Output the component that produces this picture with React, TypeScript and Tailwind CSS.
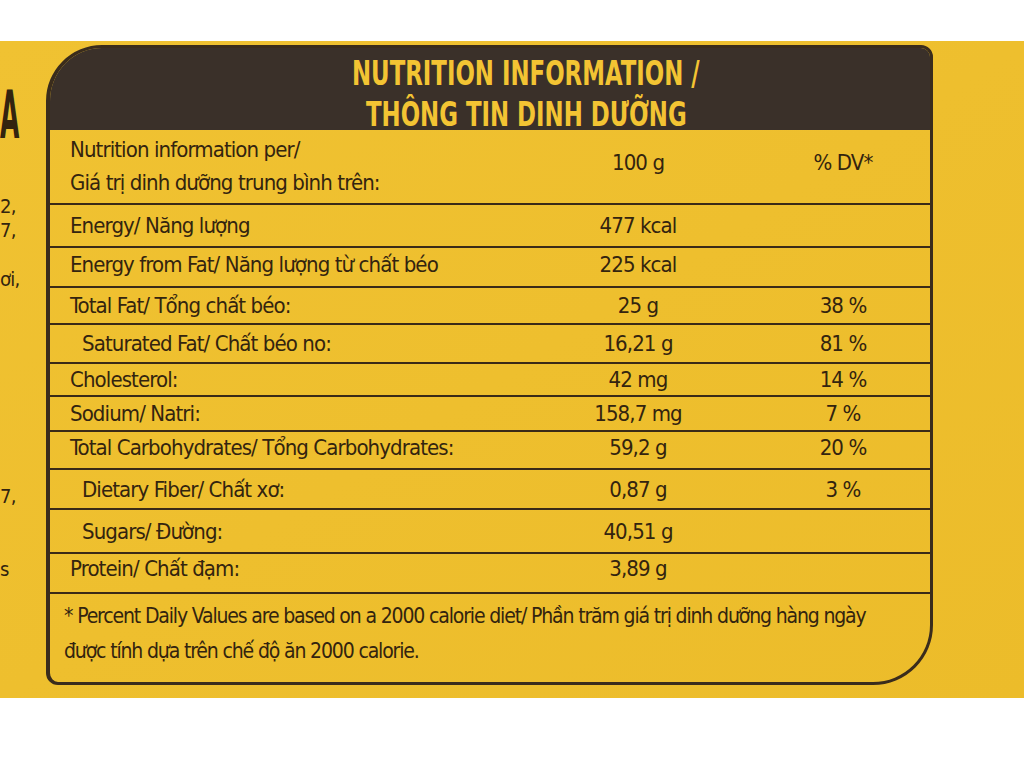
import React from "react";

type Row = {
  label: string;
  value: string;
  dv: string;
  h: string;
  indent?: boolean;
  shift?: string;
};

const ROWS: Row[] = [
  { label: "Energy/ Năng lượng", value: "477 kcal", dv: "", h: "h-[43px]" },
  { label: "Energy from Fat/ Năng lượng từ chất béo", value: "225 kcal", dv: "", h: "h-[40px]", shift: "pb-[6px]" },
  { label: "Total Fat/ Tổng chất béo:", value: "25 g", dv: "38 %", h: "h-[37px]" },
  { label: "Saturated Fat/ Chất béo no:", value: "16,21 g", dv: "81 %", h: "h-[39px]", indent: true },
  { label: "Cholesterol:", value: "42 mg", dv: "14 %", h: "h-[33px]" },
  { label: "Sodium/ Natri:", value: "158,7 mg", dv: "7 %", h: "h-[35px]" },
  { label: "Total Carbohydrates/ Tổng Carbohydrates:", value: "59,2 g", dv: "20 %", h: "h-[38px]", shift: "pb-[6px]" },
  { label: "Dietary Fiber/ Chất xơ:", value: "0,87 g", dv: "3 %", h: "h-[40px]", indent: true },
  { label: "Sugars/ Đường:", value: "40,51 g", dv: "", h: "h-[44px]", indent: true },
  { label: "Protein/ Chất đạm:", value: "3,89 g", dv: "", h: "h-[40px]", shift: "pb-[9px]" },
];

const LEFT_LINES = ["2,", "7,", "", "ơi,", "", "", "", "", "", "", "", "", "7,", "", "", "s"];

export default function App() {
  return (
    <div className="w-[1024px] h-[768px] bg-white flex flex-col font-['DejaVu_Sans_Condensed','Liberation_Sans',sans-serif] text-[#33240f]">
      <div className="h-[41px] shrink-0" />
      <div className="h-[657px] shrink-0 bg-gradient-to-br from-[#f0c232] via-[#eebf2e] to-[#ecbc2a] flex pt-[4px]">
        {/* left cut-off column */}
        <div className="w-[46px] shrink-0 overflow-hidden flex flex-col">
          <div className="h-[48px] leading-[48px] text-[66px] font-bold origin-left scale-x-[0.42] mt-[47px] text-[#33240f]">
            A
          </div>
          <div className="mt-[54px] flex flex-col text-[20px] leading-[24.2px] tracking-[-0.8px]">
            {LEFT_LINES.map((t, i) => (
              <div key={i} className="h-[24.2px] whitespace-nowrap">
                {t}
              </div>
            ))}
          </div>
        </div>

        {/* label box */}
        <div className="w-[887px] h-[640px] shrink-0 border-[3px] border-l-[4px] border-[#3a2c1c] rounded-tl-[56px] rounded-tr-[12px] rounded-br-[60px] rounded-bl-[12px] overflow-hidden flex flex-col">
          <div className="h-[82px] shrink-0 bg-[#3a3029] flex flex-col items-center pl-[72px] pt-[5px] text-[#f3c433] font-bold text-[33px] leading-[41px]">
            <div className="scale-x-[0.77] whitespace-nowrap">NUTRITION INFORMATION /</div>
            <div className="scale-x-[0.77] whitespace-nowrap">THÔNG TIN DINH DƯỠNG</div>
          </div>

          {/* column header row */}
          <div className="h-[73px] shrink-0 flex text-[22px] leading-[33px] tracking-[-0.9px]">
            <div className="flex-1 pl-[20px] pt-[3px] whitespace-nowrap">
              <div>Nutrition information per/</div>
              <div>Giá trị dinh dưỡng trung bình trên:</div>
            </div>
            <div className="w-[160px] text-center pt-[16px] whitespace-nowrap">100 g</div>
            <div className="w-[75px]" />
            <div className="w-[100px] text-center pt-[16px] whitespace-nowrap">% DV*</div>
            <div className="w-[37px]" />
          </div>

          {ROWS.map((r, i) => (
            <div
              key={i}
              className={`${r.h} ${r.shift ?? ""} shrink-0 flex items-center border-t-2 border-[#3a2a17] text-[22px] leading-[33px] tracking-[-0.9px]`}
            >
              <div className={`flex-1 whitespace-nowrap ${r.indent ? "pl-[32px]" : "pl-[20px]"}`}>{r.label}</div>
              <div className="w-[160px] text-center whitespace-nowrap">{r.value}</div>
              <div className="w-[75px]" />
              <div className="w-[100px] text-center whitespace-nowrap">{r.dv}</div>
              <div className="w-[37px]" />
            </div>
          ))}

          {/* footer */}
          <div className="flex-1 border-t-2 border-[#3a2a17] pl-[14px] pt-[5px] text-[21px] leading-[35px] whitespace-nowrap tracking-[-1.15px]">
            <div>* Percent Daily Values are based on a 2000 calorie diet/ Phần trăm giá trị dinh dưỡng hàng ngày</div>
            <div>được tính dựa trên chế độ ăn 2000 calorie.</div>
          </div>
        </div>
        <div className="flex-1" />
      </div>
      <div className="flex-1" />
    </div>
  );
}
